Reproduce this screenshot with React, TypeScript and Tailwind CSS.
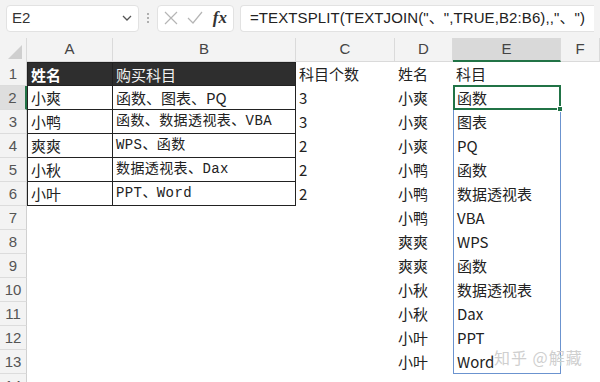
import * as React from "react";

const COLS = ["A", "B", "C", "D", "E", "F"];
const COL_W = ["w-[86px]", "w-[183px]", "w-[99px]", "w-[58px]", "w-[108px]", "flex-1"];

type Cell = { text?: string; cls?: string };

const tableNames = ["小爽", "小鸭", "爽爽", "小秋", "小叶"];
const tableItems = ["函数、图表、PQ", "函数、数据透视表、VBA", "WPS、函数", "数据透视表、Dax", "PPT、Word"];
const counts = ["3", "3", "2", "2", "2"];
const spillNames = ["小爽", "小爽", "小爽", "小鸭", "小鸭", "小鸭", "爽爽", "爽爽", "小秋", "小秋", "小叶", "小叶"];
const spillItems = ["函数", "图表", "PQ", "函数", "数据透视表", "VBA", "WPS", "函数", "数据透视表", "Dax", "PPT", "Word"];

function rowCells(r: number): Cell[] {
  const cells: Cell[] = [{}, {}, {}, {}, {}, {}];
  if (r === 1) {
    cells[0] = { text: "姓名", cls: "bg-[#2e2e2e] text-white font-bold border-y border-l border-r border-[#222]" };
    cells[1] = { text: "购买科目", cls: "bg-[#2e2e2e] text-[#f2f2f2] border-y border-r border-[#222]" };
    cells[2] = { text: "科目个数" };
    cells[3] = { text: "姓名" };
    cells[4] = { text: "科目" };
  } else if (r <= 6) {
    const i = r - 2;
    cells[0] = { text: tableNames[i], cls: "border-l border-r border-b border-[#222]" };
    cells[1] = {
      text: tableItems[i],
      cls: `border-r border-b border-[#222] ${
        i === 0 ? "" : "font-['Liberation_Mono','Noto_Sans_CJK_SC',monospace] text-[14px] tracking-[0.4px]"
      }`,
    };
    cells[2] = { text: counts[i] };
  }
  if (r >= 2 && r <= 13) {
    cells[3] = { text: spillNames[r - 2] };
    cells[4] = { text: spillItems[r - 2] };
  }
  return cells;
}

function XIcon() {
  return (
    <svg width="14" height="14" viewBox="0 0 14 14" fill="none" stroke="#b5b5b5" strokeWidth="1.2">
      <path d="M1 1 L13 13 M13 1 L1 13" />
    </svg>
  );
}

function CheckIcon() {
  return (
    <svg width="16" height="14" viewBox="0 0 16 14" fill="none" stroke="#b5b5b5" strokeWidth="1.2">
      <path d="M1 7 L6 12 L15 1" />
    </svg>
  );
}

export default function App() {
  const rows = Array.from({ length: 14 }, (_, i) => i + 1);
  return (
    <div className="relative h-[382px] w-[600px] overflow-hidden bg-white font-['Noto_Sans_CJK_SC',sans-serif] text-[#222]">
      {/* formula bar */}
      <div className="flex h-[38px] items-center gap-[6px] bg-[#f3f3f3] px-[6px] pb-[2px]">
        <div className="flex h-[27px] w-[133px] items-center justify-between rounded-[4px] border border-[#e2e2e2] bg-white pl-[5px] pr-[6px] font-['Liberation_Sans',sans-serif] text-[15px] text-[#333]">
          <span>E2</span>
          <svg width="10" height="6" viewBox="0 0 10 6" fill="none" stroke="#555" strokeWidth="1.3">
            <path d="M1 1 L5 5 L9 1" />
          </svg>
        </div>
        <div className="mx-[2px] flex flex-col gap-[2px]">
          <span className="h-[2px] w-[2px] rounded-full bg-[#999]" />
          <span className="h-[2px] w-[2px] rounded-full bg-[#999]" />
          <span className="h-[2px] w-[2px] rounded-full bg-[#999]" />
        </div>
        <div className="flex h-[27px] w-[77px] items-center justify-between rounded-[4px] border border-[#e2e2e2] bg-white px-[6px]">
          <XIcon />
          <CheckIcon />
          <span className="font-['Liberation_Serif',serif] text-[17px] font-bold italic text-[#333]">fx</span>
        </div>
        <div className="flex h-[27px] flex-1 items-center rounded-l-[4px] border border-r-0 border-[#e2e2e2] bg-white pl-[9px] font-['Liberation_Sans','Noto_Sans_CJK_SC',sans-serif] text-[15px] tracking-[0.1px] whitespace-nowrap text-[#222]">
          =TEXTSPLIT(TEXTJOIN("、",TRUE,B2:B6),,"、")
        </div>
      </div>

      {/* column headers */}
      <div className="flex h-[24px] bg-[#f3f3f3] font-['Liberation_Sans',sans-serif] text-[15px] text-[#444]">
        <div className="relative w-[27px] border-r border-[#dadada]">
          <div className="absolute right-[4px] bottom-[3px] h-0 w-0 border-b-[14px] border-l-[14px] border-b-[#cfcfcf] border-l-transparent" />
        </div>
        {COLS.map((c, i) => (
          <div
            key={c}
            className={`${COL_W[i]} flex items-center justify-center border-r border-[#dadada] ${
              c === "E" ? "border-b-2 border-b-[#217346] bg-[#d9d9d9]" : "border-b border-b-[#dadada]"
            }`}
          >
            {c}
          </div>
        ))}
      </div>

      {/* rows */}
      {rows.map((r) => (
        <div key={r} className="flex h-[24px] text-[15px] leading-[23px]">
          <div
            className={`flex w-[27px] shrink-0 items-center justify-center border-b border-[#dcdcdc] font-['Liberation_Sans',sans-serif] text-[15px] text-[#555] ${
              r === 2 ? "border-r-2 border-r-[#217346] bg-[#dedede]" : "border-r border-r-[#d0d0d0] bg-[#f3f3f3]"
            }`}
          >
            {r}
          </div>
          {rowCells(r).map((cell, i) => (
            <div
              key={i}
              className={`${COL_W[i]} shrink-0 overflow-visible whitespace-nowrap pl-[3px] ${cell.cls ?? ""} ${
                i === 4 && r >= 2 && r <= 13 ? "border-x border-[#6b93cf]" : ""
              } ${i === 4 && r === 13 ? "border-b" : ""} ${i === 5 ? "min-w-0" : ""} ${
                i === 4 && r === 2 ? "relative" : ""
              }`}
            >
              {cell.text}
              {i === 4 && r === 2 && (
                <div className="absolute -top-px -right-px -left-px h-[25px] border-2 border-[#217346]">
                  <div className="absolute -right-[4px] -bottom-[4px] h-[6px] w-[6px] border border-white bg-[#217346]" />
                </div>
              )}
            </div>
          ))}
        </div>
      ))}

      <div className="absolute top-[345px] left-[494px] text-[16px] tracking-[1px] text-[#cfcfcf]">知乎 @解藏</div>
    </div>
  );
}
